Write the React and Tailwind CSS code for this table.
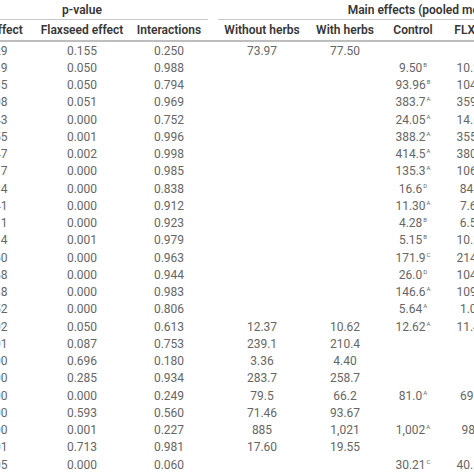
const cols = [
  'w-[95px]',
  'w-[84px]',
  'w-[90px]',
  'w-[96px]',
  'w-[70px]',
  'w-[66px]',
  'w-[56px]',
];

const rows = [
  ['0.029', '0.155', '0.250', '73.97', '77.50', '', ''],
  ['0.019', '0.050', '0.988', '', '', ['9.50', 'B'], ['10.21', 'B']],
  ['0.035', '0.050', '0.794', '', '', ['93.96', 'B'], ['104.2', 'B']],
  ['0.008', '0.051', '0.969', '', '', ['383.7', 'A'], ['359.4', 'A']],
  ['0.043', '0.000', '0.752', '', '', ['24.05', 'A'], ['14.62', 'B']],
  ['0.055', '0.001', '0.996', '', '', ['388.2', 'A'], ['355.1', 'A']],
  ['0.047', '0.002', '0.998', '', '', ['414.5', 'A'], ['380.9', 'A']],
  ['0.017', '0.000', '0.985', '', '', ['135.3', 'A'], ['106.4', 'B']],
  ['0.014', '0.000', '0.838', '', '', ['16.6', 'D'], ['84.3', 'A']],
  ['0.041', '0.000', '0.912', '', '', ['11.30', 'A'], ['7.60', 'B']],
  ['0.011', '0.000', '0.923', '', '', ['4.28', 'B'], ['6.52', 'A']],
  ['0.014', '0.001', '0.979', '', '', ['5.15', 'B'], ['10.11', 'A']],
  ['0.060', '0.000', '0.963', '', '', ['171.9', 'C'], ['214.6', 'A']],
  ['0.068', '0.000', '0.944', '', '', ['26.0', 'D'], ['104.2', 'A']],
  ['0.018', '0.000', '0.983', '', '', ['146.6', 'A'], ['109.7', 'B']],
  ['0.052', '0.000', '0.806', '', '', ['5.64', 'A'], ['1.05', 'B']],
  ['0.002', '0.050', '0.613', '12.37', '10.62', ['12.62', 'A'], ['11.48', 'A']],
  ['0.001', '0.087', '0.753', '239.1', '210.4', '', ''],
  ['0.000', '0.696', '0.180', '3.36', '4.40', '', ''],
  ['0.000', '0.285', '0.934', '283.7', '258.7', '', ''],
  ['0.000', '0.000', '0.249', '79.5', '66.2', ['81.0', 'A'], ['69.4', 'B']],
  ['0.000', '0.593', '0.560', '71.46', '93.67', '', ''],
  ['0.000', '0.001', '0.227', '885', '1,021', ['1,002', 'A'], ['985', 'A']],
  ['0.001', '0.713', '0.981', '17.60', '19.55', '', ''],
  ['0.005', '0.000', '0.060', '', '', ['30.21', 'C'], ['40.15', 'B']],
];

const headers = [
  'Herb effect',
  'Flaxseed effect',
  'Interactions',
  'Without herbs',
  'With herbs',
  'Control',
  'FLX 5%',
];

function Cell({ value, width }) {
  if (Array.isArray(value)) {
    return (
      <div className={`${width} flex justify-center`}>
        <span>
          {value[0]}
          <sup className="text-[6px] relative top-[-5px] ml-[1px]">{value[1]}</sup>
        </span>
      </div>
    );
  }
  return (
    <div className={`${width} flex justify-center`}>
      <span>{value}</span>
    </div>
  );
}

export default function App() {
  return (
    <div
      className="w-[474px] h-[474px] overflow-hidden bg-white"
      style={{ fontFamily: 'Roboto, "Liberation Sans", sans-serif' }}
    >
      <div className="ml-[-55px] w-[720px]">
        {/* group headers */}
        <div className="flex h-[20px] text-[12px] font-semibold text-[#363636]">
          <div className="w-[263px] pl-[11px] border-b border-[#c8c8c8] flex items-center justify-center">
            p-value
          </div>
          <div className="w-[10px]" />
          <div className="w-[414px] border-b border-[#c8c8c8] flex items-center justify-center">
            Main effects (pooled means)
          </div>
        </div>

        {/* column headers */}
        <div className="flex h-[22px] items-center text-[12px] font-semibold text-[#363636] border-b-2 border-[#bdbdbd] whitespace-nowrap">
          {headers.map((h, i) => (
            <div key={i} className={`${cols[i]} flex justify-center`}>
              <span>{h}</span>
            </div>
          ))}
        </div>

        {/* data */}
        <div className="text-[12px] text-[#666] whitespace-nowrap">
          {rows.map((r, i) => (
            <div key={i} className="flex h-[17.25px] items-center">
              {r.map((v, j) => (
                <Cell key={j} value={v} width={cols[j]} />
              ))}
            </div>
          ))}
        </div>
      </div>
    </div>
  );
}
